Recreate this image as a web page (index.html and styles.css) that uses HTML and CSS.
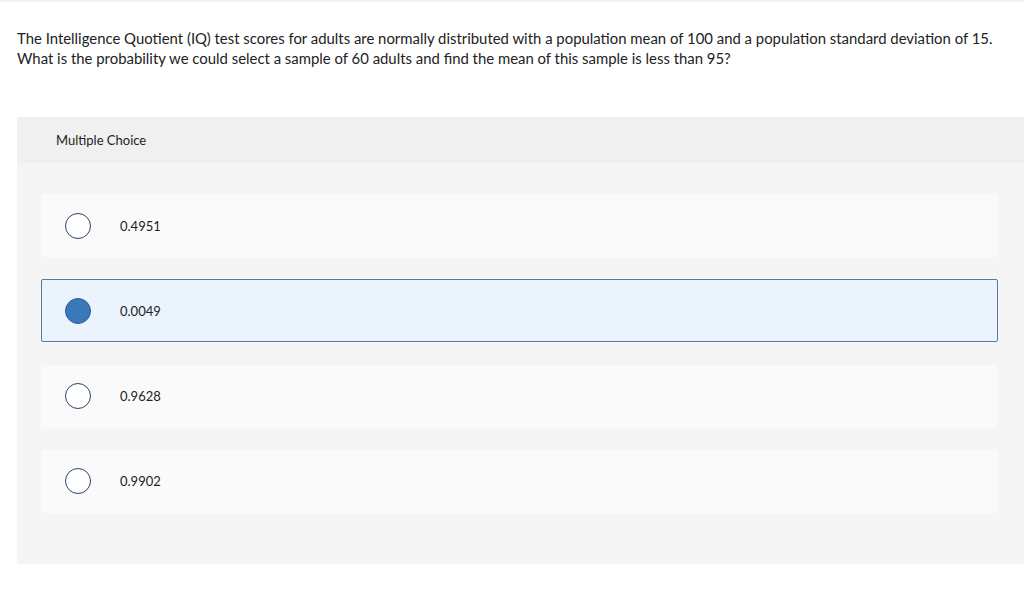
FILE: index.html
```html
<!DOCTYPE html>
<html>
<head>
<meta charset="utf-8">
<link rel="stylesheet" href="styles.css">
</head>
<body>
<div class="topline"></div>
<p class="question">The Intelligence Quotient (IQ) test scores for adults are normally distributed with a population mean of 100 and a population standard deviation of 15.<br>What is the probability we could select a sample of 60 adults and find the mean of this sample is less than 95?</p>
<section class="panel">
  <div class="panel-head">Multiple Choice</div>
  <div class="panel-body">
    <div class="option"><span class="radio"></span><span class="label">0.4951</span></div>
    <div class="option selected"><span class="radio"></span><span class="label">0.0049</span></div>
    <div class="option"><span class="radio"></span><span class="label">0.9628</span></div>
    <div class="option"><span class="radio"></span><span class="label">0.9902</span></div>
  </div>
</section>
</body>
</html>
```
FILE: styles.css
```css
html, body {
  margin: 0;
  padding: 0;
  background: #ffffff;
}
body {
  font-family: "Lato", "Liberation Sans", sans-serif;
  color: #222;
}
.topline {
  height: 2px;
  background: linear-gradient(#ececec, #fafafa);
}
.question {
  margin: 26px 0 0 17px;
  font-size: 14.9px;
  line-height: 20px;
  color: #222;
}
.panel {
  margin: 49px 0 0 17px;
  background: #f5f5f5;
}
.panel-head {
  height: 46px;
  display: flex;
  align-items: center;
  padding-left: 39px;
  background: #f0f0f0;
  font-size: 13px;
  color: #222;
}
.panel-body {
  display: flex;
  flex-direction: column;
  gap: 22.33px;
  padding: 31px 26px 51px 24px;
}
.option {
  box-sizing: border-box;
  height: 63px;
  display: flex;
  align-items: center;
  padding-left: 23px;
  background: #fafafa;
  border: 1px solid #fafafa;
  border-radius: 2px;
}
.option.selected {
  background: #ebf3fc;
  border-color: #5b7a99;
}
.radio {
  box-sizing: border-box;
  width: 26px;
  height: 26px;
  border-radius: 50%;
  border: 1px solid #2c4562;
  background: #fff;
  flex: none;
}
.option.selected .radio {
  background: #3b78ba;
  border-color: #2f5f96;
}
.label {
  margin-left: 29px;
  font-size: 13px;
  color: #222;
}
```
